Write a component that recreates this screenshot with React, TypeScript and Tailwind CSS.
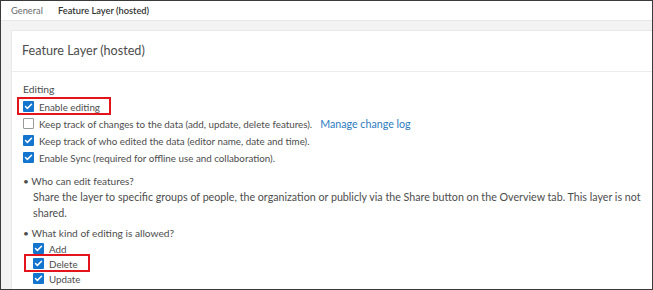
import { Check } from "lucide-react"

function Box({ checked }: { checked: boolean }) {
  return checked ? (
    <span className="w-[11px] h-[11px] shrink-0 bg-[#1475cf] flex items-center justify-center rounded-[1px]">
      <Check className="w-[9px] h-[9px] text-white" strokeWidth={4} />
    </span>
  ) : (
    <span className="w-[11px] h-[11px] shrink-0 bg-white border border-[#9a9a9a] rounded-[1px]" />
  )
}

function Row({
  checked,
  children,
  className = "",
}: {
  checked: boolean
  children: React.ReactNode
  className?: string
}) {
  return (
    <div className={`relative flex items-center gap-[5px] ${className}`}>
      <Box checked={checked} />
      <span className="whitespace-nowrap">{children}</span>
    </div>
  )
}

export default function App() {
  return (
    <div
      className="w-[653px] h-[290px] overflow-hidden border border-[#3a3a3a] bg-[#f3f3f3] flex flex-col text-[#4d4d4d]"
      style={{ fontFamily: "Lato, sans-serif" }}
    >
      {/* Tabs */}
      <div className="h-[20px] shrink-0 bg-white flex items-center gap-[15px] pl-[10px] text-[9.3px] border-b border-[#e6e6e6]">
        <span className="text-[#6b6b6b]">General</span>
        <span className="text-[#333] font-semibold">Feature Layer (hosted)</span>
      </div>

      {/* Panel */}
      <div className="flex-1 pt-[9px] pl-[10px]">
        <div className="h-full bg-white border-l border-t border-[#e8e8e8]">
          <div className="h-[41px] flex items-center px-[10px] text-[12.6px] text-[#4c4c4c] border-b border-[#ececec]">
            Feature Layer (hosted)
          </div>

          <div className="pl-[11px] pt-[9px] text-[9.8px] leading-[16px]">
            <div className="text-[10.3px] mb-[1px]">Editing</div>

            <Row checked className="h-[17px]">
              Enable editing
              <span className="absolute left-[-6px] top-[-1px] w-[94px] h-[18px] border-2 border-[#e3141b]" />
            </Row>
            <Row checked={false} className="h-[17px]">
              Keep track of changes to the data (add, update, delete features).
              <span className="ml-[8px] text-[10.7px] text-[#2b7bc0]">Manage change log</span>
            </Row>
            <Row checked className="h-[17px]">
              Keep track of who edited the data (editor name, date and time).
            </Row>
            <Row checked className="h-[17px]">
              Enable Sync (required for offline use and collaboration).
            </Row>

            <div className="mt-[7px] text-[10.1px]">• Who can edit features?</div>
            <div className="pl-[10px] text-[10.7px] whitespace-nowrap">
              Share the layer to specific groups of people, the organization or publicly via the Share button on the
              Overview tab. This layer is not
              <br />
              shared.
            </div>

            <div className="mt-[4px] text-[10.2px]">• What kind of editing is allowed?</div>
            <div className="pl-[10px]">
              <Row checked className="h-[15px]">
                Add
              </Row>
              <Row checked className="h-[15px]">
                Delete
                <span className="absolute left-[-9px] top-[-2px] w-[66px] h-[18px] border-2 border-[#e3141b]" />
              </Row>
              <Row checked className="h-[15px]">
                Update
              </Row>
            </div>
          </div>
        </div>
      </div>
    </div>
  )
}
